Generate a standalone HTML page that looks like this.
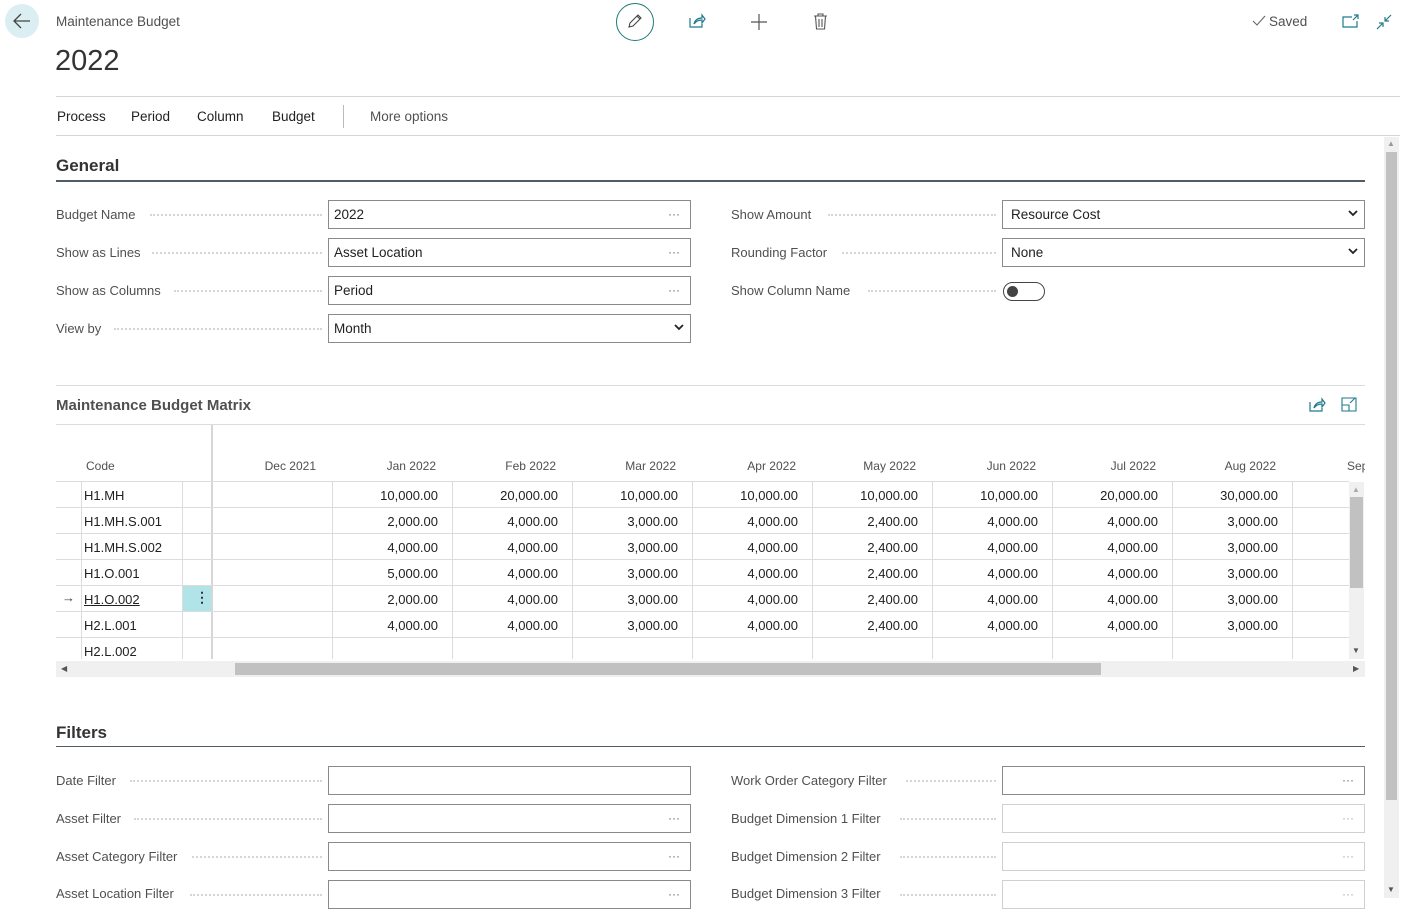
<!DOCTYPE html>
<html><head><meta charset="utf-8">
<style>
*{margin:0;padding:0;box-sizing:border-box}
body{width:1408px;height:898px;overflow:hidden;background:#fff;font-family:"Liberation Sans",sans-serif;color:#212121;position:relative}
.a{position:absolute;white-space:nowrap}
.lbl{font-size:13px;color:#505050}
.dots{position:absolute;border-bottom:2px dotted #d6d6d6;height:1px}
.inp{position:absolute;border:1px solid #8a8a8a;height:29px;font-size:13.5px;padding:6px 0 0 5px;color:#212121;background:#fff}
.inp.dis{border-color:#d0d0d0}
.inp .el{position:absolute;right:10px;top:6px;color:#666;font-size:12px;letter-spacing:0}
.inp .chev{position:absolute;right:5px;top:7px}
.hl{position:absolute;height:1px;background:#dcdcdc}
.vl{position:absolute;width:1px;background:#dcdcdc}
.num{position:absolute;font-size:13px;text-align:right;width:100px}
.hd{position:absolute;font-size:12px;color:#505050;text-align:right;width:100px}
</style></head><body>

<div class="a" style="left:5px;top:4px;width:34px;height:34px;border-radius:50%;background:#dbeef1"></div>
<svg class="a" style="left:12px;top:12px" width="20" height="18" viewBox="0 0 20 18"><path d="M18 9H3M9 2L2 9l7 7" fill="none" stroke="#444" stroke-width="1.3"/></svg>
<div class="a" style="left:56px;top:14px;font-size:13.5px;color:#505050">Maintenance Budget</div>
<div class="a" style="left:55px;top:45px;font-size:29px;color:#333;font-weight:300">2022</div>

<div class="a" style="left:616px;top:3px;width:38px;height:38px;border-radius:50%;border:1.5px solid #1f7a7a"></div>
<svg class="a" style="left:626px;top:12px" width="18" height="18" viewBox="0 0 18 18"><path d="M3 15l1-4 8-8 3 3-8 8zM11 4l3 3" fill="none" stroke="#444" stroke-width="1.1"/></svg>
<svg class="a" style="left:688px;top:13px" width="18" height="16" viewBox="0 0 18 16"><path d="M2 5v9h12v-3M6 11c1-4 4-6 8-6V2l3 4-3 4V7c-3 0-6 1-8 4z" fill="none" stroke="#1f7a8a" stroke-width="1.2"/></svg>
<svg class="a" style="left:750px;top:13px" width="18" height="18" viewBox="0 0 18 18"><path d="M9 1v16M1 9h16" stroke="#555" stroke-width="1.2"/></svg>
<svg class="a" style="left:813px;top:13px" width="15" height="17" viewBox="0 0 15 17"><path d="M1 3h13M5 3V1h5v2M2.5 3l1 13h8l1-13M6 6v8M9 6v8" fill="none" stroke="#555" stroke-width="1.1"/></svg>

<svg class="a" style="left:1252px;top:15px" width="14" height="12" viewBox="0 0 14 12"><path d="M1 6l4 4 8-9" fill="none" stroke="#666" stroke-width="1.1"/></svg>
<div class="a" style="left:1269px;top:14px;font-size:13.5px;color:#505050">Saved</div>
<svg class="a" style="left:1342px;top:14px" width="18" height="14" viewBox="0 0 18 14"><path d="M10 3H1v10h14V7M12 1h4v4M16 1l-5 5" fill="none" stroke="#1f7a8a" stroke-width="1.2"/></svg>
<svg class="a" style="left:1375px;top:13px" width="18" height="18" viewBox="0 0 18 18"><path d="M16 2l-6 6M10 4v4h4M2 16l6-6M4 10h4v4" fill="none" stroke="#1f7a8a" stroke-width="1.2"/></svg>

<div class="hl" style="left:56px;top:96px;width:1344px;background:#d6d6d6"></div>
<div class="a" style="left:57px;top:109px;font-size:13.5px">Process</div>
<div class="a" style="left:131px;top:109px;font-size:13.5px">Period</div>
<div class="a" style="left:197px;top:109px;font-size:13.5px">Column</div>
<div class="a" style="left:272px;top:109px;font-size:13.5px">Budget</div>
<div class="vl" style="left:343px;top:105px;height:23px;background:#bbb"></div>
<div class="a" style="left:370px;top:109px;font-size:13.5px;color:#505050">More options</div>
<div class="hl" style="left:56px;top:135px;width:1344px;background:#d6d6d6"></div>

<div class="a" style="left:1384px;top:137px;width:15px;height:761px;background:#f0f0f0"></div>
<div class="a" style="left:1386px;top:152px;width:11px;height:648px;background:#c1c1c1"></div>
<div class="a" style="left:1387px;top:139px;font-size:8px;color:#999">▲</div>
<div class="a" style="left:1387px;top:885px;font-size:8px;color:#555">▼</div>

<div class="a" style="left:56px;top:156px;font-size:17px;font-weight:bold;color:#333">General</div>
<div class="hl" style="left:56px;top:180px;width:1309px;height:2px;background:#505c66"></div>

<div class="a lbl" style="left:56px;top:207px">Budget Name</div><div class="dots" style="left:150px;top:214px;width:172px"></div>
<div class="inp" style="left:328px;top:200px;width:363px">2022<span class="el">···</span></div>
<div class="a lbl" style="left:56px;top:245px">Show as Lines</div><div class="dots" style="left:152px;top:252px;width:170px"></div>
<div class="inp" style="left:328px;top:238px;width:363px">Asset Location<span class="el">···</span></div>
<div class="a lbl" style="left:56px;top:283px">Show as Columns</div><div class="dots" style="left:174px;top:290px;width:148px"></div>
<div class="inp" style="left:328px;top:276px;width:363px">Period<span class="el">···</span></div>
<div class="a lbl" style="left:56px;top:321px">View by</div><div class="dots" style="left:114px;top:328px;width:208px"></div>
<div class="inp" style="left:328px;top:314px;width:363px">Month<svg class="chev" width="12" height="10" viewBox="0 0 12 10"><path d="M2 3l4 4 4-4" fill="none" stroke="#222" stroke-width="1.8"/></svg></div>

<div class="a lbl" style="left:731px;top:207px">Show Amount</div><div class="dots" style="left:828px;top:214px;width:168px"></div>
<div class="inp" style="left:1002px;top:200px;width:363px;padding-left:8px">Resource Cost<svg class="chev" width="12" height="10" viewBox="0 0 12 10"><path d="M2 3l4 4 4-4" fill="none" stroke="#222" stroke-width="1.8"/></svg></div>
<div class="a lbl" style="left:731px;top:245px">Rounding Factor</div><div class="dots" style="left:842px;top:252px;width:154px"></div>
<div class="inp" style="left:1002px;top:238px;width:363px;padding-left:8px">None<svg class="chev" width="12" height="10" viewBox="0 0 12 10"><path d="M2 3l4 4 4-4" fill="none" stroke="#222" stroke-width="1.8"/></svg></div>
<div class="a lbl" style="left:731px;top:283px">Show Column Name</div><div class="dots" style="left:868px;top:290px;width:128px"></div>
<div class="a" style="left:1003px;top:282px;width:42px;height:19px;border:1px solid #444;border-radius:10px"></div>
<div class="a" style="left:1007px;top:286px;width:11px;height:11px;border-radius:50%;background:#444"></div>

<div class="hl" style="left:56px;top:385px;width:1309px"></div>
<div class="a" style="left:56px;top:397px;font-size:15px;font-weight:bold;color:#505050">Maintenance Budget Matrix</div>
<svg class="a" style="left:1308px;top:397px" width="18" height="16" viewBox="0 0 18 16"><path d="M2 5v9h12v-3M6 11c1-4 4-6 8-6V2l3 4-3 4V7c-3 0-6 1-8 4z" fill="none" stroke="#1f7a8a" stroke-width="1.2"/></svg>
<svg class="a" style="left:1341px;top:397px" width="16" height="15" viewBox="0 0 16 15"><path d="M1 1h14v13H1zM1 8h7v6M9 6l5-5M10 1h5v5" fill="none" stroke="#1f7a8a" stroke-width="1.1"/></svg>
<div class="hl" style="left:56px;top:424px;width:1309px"></div>

<div class="a" style="left:211px;top:425px;width:2px;height:234px;background:#d6d6d6"></div>
<div class="a" style="left:86px;top:459px;font-size:12px;color:#505050">Code</div>

<div id="grid"></div>

<div class="a" style="left:56px;top:661px;width:1309px;height:16px;background:#f0f0f0"></div>
<div class="a" style="left:235px;top:663px;width:866px;height:12px;background:#c1c1c1"></div>
<div class="a" style="left:61px;top:664px;font-size:8px;color:#555">◀</div>
<div class="a" style="left:1353px;top:664px;font-size:8px;color:#555">▶</div>
<div class="a" style="left:1349px;top:482px;width:15px;height:177px;background:#f0f0f0"></div>
<div class="a" style="left:1350px;top:497px;width:13px;height:91px;background:#c1c1c1"></div>
<div class="a" style="left:1352px;top:485px;font-size:8px;color:#aaa">▲</div>
<div class="a" style="left:1352px;top:646px;font-size:8px;color:#555">▼</div>

<div class="a" style="left:56px;top:723px;font-size:17px;font-weight:bold;color:#333">Filters</div>
<div class="hl" style="left:56px;top:746px;width:1309px;background:#505c66"></div>

<div class="a lbl" style="left:56px;top:773px">Date Filter</div><div class="dots" style="left:130px;top:780px;width:192px"></div>
<div class="inp" style="left:328px;top:766px;width:363px"></div>
<div class="a lbl" style="left:56px;top:811px">Asset Filter</div><div class="dots" style="left:134px;top:818px;width:188px"></div>
<div class="inp" style="left:328px;top:804px;width:363px"><span class="el">···</span></div>
<div class="a lbl" style="left:56px;top:849px">Asset Category Filter</div><div class="dots" style="left:192px;top:856px;width:130px"></div>
<div class="inp" style="left:328px;top:842px;width:363px"><span class="el">···</span></div>
<div class="a lbl" style="left:56px;top:886px">Asset Location Filter</div><div class="dots" style="left:190px;top:894px;width:132px"></div>
<div class="inp" style="left:328px;top:880px;width:363px"><span class="el">···</span></div>

<div class="a lbl" style="left:731px;top:773px">Work Order Category Filter</div><div class="dots" style="left:906px;top:780px;width:90px"></div>
<div class="inp" style="left:1002px;top:766px;width:363px"><span class="el">···</span></div>
<div class="a lbl" style="left:731px;top:811px">Budget Dimension 1 Filter</div><div class="dots" style="left:900px;top:818px;width:96px"></div>
<div class="inp dis" style="left:1002px;top:804px;width:363px"><span class="el" style="color:#aaa">···</span></div>
<div class="a lbl" style="left:731px;top:849px">Budget Dimension 2 Filter</div><div class="dots" style="left:900px;top:856px;width:96px"></div>
<div class="inp dis" style="left:1002px;top:842px;width:363px"><span class="el" style="color:#aaa">···</span></div>
<div class="a lbl" style="left:731px;top:886px">Budget Dimension 3 Filter</div><div class="dots" style="left:900px;top:894px;width:96px"></div>
<div class="inp dis" style="left:1002px;top:880px;width:363px"><span class="el" style="color:#aaa">···</span></div>

<script>
var g=document.getElementById('grid'),h='';
var months=['Dec 2021','Jan 2022','Feb 2022','Mar 2022','Apr 2022','May 2022','Jun 2022','Jul 2022','Aug 2022'];
for(var i=0;i<9;i++){h+='<div class="hd" style="left:'+(216+120*i)+'px;top:459px">'+months[i]+'</div>';}
h+='<div class="a" style="left:1347px;top:459px;font-size:12px;color:#505050;width:18px;overflow:hidden">Sep</div>';
var codes=['H1.MH','H1.MH.S.001','H1.MH.S.002','H1.O.001','H1.O.002','H2.L.001','H2.L.002'];
var vals=[
['10,000.00','20,000.00','10,000.00','10,000.00','10,000.00','10,000.00','20,000.00','30,000.00'],
['2,000.00','4,000.00','3,000.00','4,000.00','2,400.00','4,000.00','4,000.00','3,000.00'],
['4,000.00','4,000.00','3,000.00','4,000.00','2,400.00','4,000.00','4,000.00','3,000.00'],
['5,000.00','4,000.00','3,000.00','4,000.00','2,400.00','4,000.00','4,000.00','3,000.00'],
['2,000.00','4,000.00','3,000.00','4,000.00','2,400.00','4,000.00','4,000.00','3,000.00'],
['4,000.00','4,000.00','3,000.00','4,000.00','2,400.00','4,000.00','4,000.00','3,000.00'],
[]];
for(var r=0;r<=7;r++){h+='<div class="hl" style="left:56px;top:'+(481+26*r)+'px;width:1293px"></div>';}
[81,182].forEach(function(x){h+='<div class="vl" style="left:'+x+'px;top:481px;height:178px"></div>';});
for(var c=1;c<=9;c++){h+='<div class="vl" style="left:'+(212+120*c)+'px;top:481px;height:178px"></div>';}
h+='<div class="a" style="left:183px;top:586px;width:28px;height:25px;background:#b0e4e8"></div>';
h+='<div class="a" style="left:195px;top:589px;font-size:14px;color:#333;font-weight:bold">⋮</div>';
h+='<div class="a" style="left:62px;top:590px;font-size:13px;color:#444">→</div>';
for(var r=0;r<7;r++){
 var y=488+26*r;
 h+='<div class="a" style="left:84px;top:'+y+'px;font-size:13px;'+(r==4?'text-decoration:underline':'')+'">'+codes[r]+'</div>';
 for(var c=0;c<vals[r].length;c++){h+='<div class="num" style="left:'+(338+120*c)+'px;top:'+y+'px">'+vals[r][c]+'</div>';}
}
g.innerHTML=h;
</script>
</body></html>
